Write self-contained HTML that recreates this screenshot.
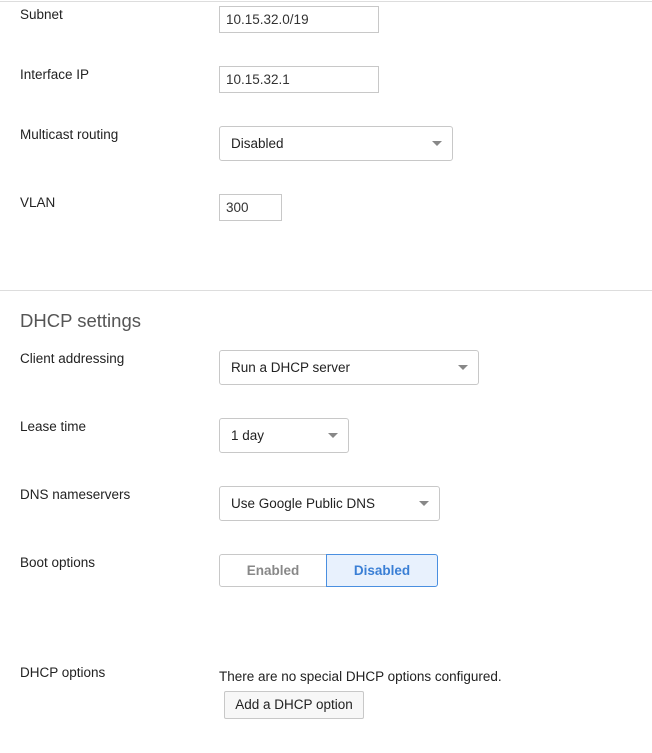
<!DOCTYPE html>
<html><head><meta charset="utf-8"><style>
body{margin:0;width:652px;height:753px;background:#fff;font-family:"Liberation Sans",Arial,sans-serif;font-size:13.5px;color:#222;position:relative;overflow:hidden}
.a{position:absolute}
.lbl{position:absolute;left:20px;line-height:16px}
.inp{position:absolute;left:219px;border:1px solid #c8c8c8;box-sizing:border-box;height:27px;line-height:25px;padding-left:6px;color:#333}
.sel{position:absolute;left:219px;border:1px solid #c8c8c8;border-radius:3px;box-sizing:border-box;height:35px;line-height:33px;padding-left:11px;color:#222}
.sel:after{content:"";position:absolute;right:10px;top:14px;border-left:5px solid transparent;border-right:5px solid transparent;border-top:5px solid #888}
.hr{position:absolute;left:0;width:652px;height:1px;background:#ddd}
</style></head><body>
<div class="hr" style="top:1px"></div>
<div class="lbl" style="top:7px">Subnet</div>
<div class="inp" style="top:6px;width:160px">10.15.32.0/19</div>
<div class="lbl" style="top:67px">Interface IP</div>
<div class="inp" style="top:66px;width:160px">10.15.32.1</div>
<div class="lbl" style="top:127px">Multicast routing</div>
<div class="sel" style="top:126px;width:234px">Disabled</div>
<div class="lbl" style="top:195px">VLAN</div>
<div class="inp" style="top:194px;width:63px">300</div>
<div class="hr" style="top:290px"></div>
<div class="a" style="left:20px;top:310px;font-size:18.5px;color:#555;font-weight:300">DHCP settings</div>
<div class="lbl" style="top:351px">Client addressing</div>
<div class="sel" style="top:350px;width:260px">Run a DHCP server</div>
<div class="lbl" style="top:419px">Lease time</div>
<div class="sel" style="top:418px;width:130px">1 day</div>
<div class="lbl" style="top:487px">DNS nameservers</div>
<div class="sel" style="top:486px;width:221px">Use Google Public DNS</div>
<div class="lbl" style="top:555px">Boot options</div>
<div class="a" style="left:219px;top:554px;width:108px;height:33px;box-sizing:border-box;border:1px solid #c8c8c8;border-radius:3px 0 0 3px;text-align:center;line-height:31px;font-weight:bold;color:#888">Enabled</div>
<div class="a" style="left:326px;top:554px;width:112px;height:33px;box-sizing:border-box;border:1px solid #4a8fe0;border-radius:0 3px 3px 0;background:#e8f1fd;text-align:center;line-height:31px;font-weight:bold;color:#3a7fd5">Disabled</div>
<div class="lbl" style="top:665px">DHCP options</div>
<div class="a" style="left:219px;top:669px">There are no special DHCP options configured.</div>
<div class="a" style="left:224px;top:691px;width:140px;height:28px;box-sizing:border-box;border:1px solid #c8c8c8;border-radius:2px;background:#f7f7f7;text-align:center;line-height:26px">Add a DHCP option</div>
</body></html>
